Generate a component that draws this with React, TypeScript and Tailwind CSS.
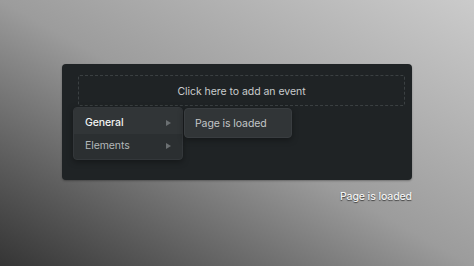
import React from "react";

function Arrow() {
  return (
    <svg width="5" height="6" viewBox="0 0 5 6" className="text-[#6b7072]">
      <path d="M0 0 L5 3 L0 6 Z" fill="currentColor" />
    </svg>
  );
}

export default function App() {
  return (
    <div
      className="w-full h-[266px] flex flex-col items-center pt-[64px] bg-gradient-to-tr from-[#353535] via-[#9c9c9c] to-[#cbcbcb]"
      style={{ fontFamily: "Inter, 'Noto Sans', sans-serif" }}
    >
      <div className="relative w-[350px] h-[116px] rounded-[4px] bg-[#1f2325] pl-[16px] pr-[7px] pt-[11px] shadow-[0_1px_2px_rgba(0,0,0,0.3)]">
        <div className="h-[31px] pt-[2px] border border-dashed border-[#3b4042] rounded-[2px] flex items-center justify-center text-[10.5px] tracking-[-0.05px] text-[#c9cccd]">
          Click here to add an event
        </div>

        {/* dropdown menu */}
        <div className="absolute left-[11px] top-[43px] w-[110px] pb-[2px] rounded-[4px] bg-[#2b2f31] border border-[#33373a] shadow-[0_2px_6px_rgba(0,0,0,0.35)] overflow-hidden text-[10.5px] tracking-[-0.1px]">
          <div className="h-[26px] pt-[4px] flex items-center justify-between pl-[11px] pr-[11px] bg-[#313537] text-[#f2f3f3] font-medium">
            <span>General</span>
            <Arrow />
          </div>
          <div className="h-[23px] flex items-center justify-between pl-[11px] pr-[11px] text-[#b4b8ba]">
            <span>Elements</span>
            <Arrow />
          </div>
        </div>

        {/* submenu */}
        <div className="absolute left-[122px] top-[44px] w-[108px] h-[30px] pt-[1px] rounded-[4px] bg-[#313537] border border-[#393d40] shadow-[0_2px_6px_rgba(0,0,0,0.35)] flex items-center pl-[10px] text-[10.5px] tracking-[-0.1px] text-[#c3c6c8]">
          Page is loaded
        </div>
      </div>

      <div className="w-[350px] flex justify-end mt-[9px]">
        <span className="text-[10.5px] tracking-[-0.1px] font-medium text-[#f2f2f2] [text-shadow:0_1px_1px_rgba(0,0,0,0.6)]">
          Page is loaded
        </span>
      </div>
    </div>
  );
}
